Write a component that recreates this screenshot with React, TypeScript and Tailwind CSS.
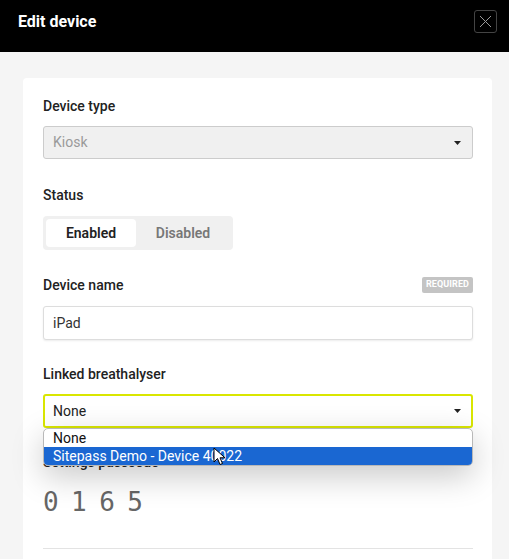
import React from "react";

function Caret() {
  return (
    <svg width="7" height="4" viewBox="0 0 7 4" className="shrink-0">
      <path d="M0 0 L7 0 L3.5 4 Z" fill="#222" />
    </svg>
  );
}

export default function App() {
  return (
    <div
      className="w-[509px] h-[559px] overflow-hidden bg-[#f5f5f5] flex flex-col"
      style={{ fontFamily: "Roboto, 'Noto Sans', sans-serif" }}
    >
      {/* Header */}
      <div className="h-[52px] shrink-0 bg-black px-[18px] pt-[10px] pr-[12px]">
        <div className="flex items-center justify-between h-[23px]">
          <div className="text-white text-[16px] font-bold leading-[23px]">Edit device</div>
          <div className="w-[23px] h-[23px] border border-[#444] rounded-[3px] flex items-center justify-center">
            <svg width="13" height="13" viewBox="0 0 13 13">
              <path d="M1 1 L12 12 M12 1 L1 12" stroke="#9a9a9a" strokeWidth="1" />
            </svg>
          </div>
        </div>
      </div>

      {/* Body */}
      <div className="flex-1 pl-[23px] pr-[17px] pt-[26px]">
        <div className="bg-white rounded-[4px] pl-5 pr-[19px] pt-[18px] pb-10">
          {/* Device type */}
          <div className="text-[14px] font-medium text-[#222] leading-5 mb-[10px]">Device type</div>
          <div className="h-[33px] bg-[#f0f0f0] border border-[#cccccc] rounded-[3px] flex items-center justify-between pl-[9px] pr-[11px]">
            <span className="text-[14px] text-[#9a9a9a]">Kiosk</span>
            <Caret />
          </div>

          {/* Status */}
          <div className="text-[14px] font-medium text-[#222] leading-5 mt-[26px] mb-[11px]">Status</div>
          <div className="w-[190px] h-[34px] bg-[#f0f0f0] rounded-[4px] p-[3px] flex">
            <div className="w-[90px] h-full bg-white rounded-[4px] flex items-center justify-center text-[14px] font-semibold text-[#222]">
              Enabled
            </div>
            <div className="flex-1 h-full flex items-center justify-center text-[14px] font-semibold text-[#777]">
              Disabled
            </div>
          </div>

          {/* Device name */}
          <div className="flex items-center justify-between mt-[25px] mb-[11px] h-5">
            <div className="text-[14px] font-medium text-[#222] leading-5">Device name</div>
            <div className="h-[16px] px-[4px] bg-[#c4c4c4] rounded-[2px] flex items-center text-[9px] font-bold text-white tracking-[0.1px]">
              REQUIRED
            </div>
          </div>
          <div className="h-[34px] bg-white border border-[#dddddd] rounded-[3px] shadow-[0_1px_2px_rgba(0,0,0,0.08)] flex items-center pl-[9px]">
            <span className="text-[14px] text-[#333]">iPad</span>
          </div>

          {/* Linked breathalyser */}
          <div className="text-[14px] font-medium text-[#222] leading-5 mt-[24px] mb-[10px]">Linked breathalyser</div>
          <div className="relative">
            <div className="h-[34px] bg-white border-2 border-[#d9e600] rounded-[3px] flex items-center justify-between pl-[8px] pr-[10px]">
              <span className="text-[14px] text-[#222]">None</span>
              <Caret />
            </div>
            <div className="absolute left-0 right-0 top-full z-10 bg-white border border-[#b8b8b8] rounded-[5px] overflow-hidden shadow-[0_10px_32px_rgba(0,0,0,0.22)]">
              <div className="h-[18px] flex items-center pl-[9px] text-[14px] text-[#111]">None</div>
              <div className="h-[18px] flex items-center pl-[9px] text-[14px] text-white bg-[#1a67d2]">
                Sitepass Demo - Device 40022
              </div>
            </div>
            <svg
              className="absolute z-20 left-[170px] top-[53px]"
              width="14"
              height="20"
              viewBox="0 0 14 20"
            >
              <path d="M1 1 L1 15 L4.5 11.5 L7 17.5 L9.5 16.5 L7 10.8 L12 10.8 Z" fill="#fff" stroke="#000" strokeWidth="1" strokeLinejoin="round" />
            </svg>
          </div>

          {/* Settings passcode */}
          <div className="text-[14px] font-medium text-[#222] leading-5 mt-[24px] mb-[14px]">Settings passcode</div>
          <div
            className="text-[26px] leading-[32px] text-[#666] tracking-[-1.6px]"
            style={{ fontFamily: "'DejaVu Sans Mono', monospace" }}
          >
            0 1 6 5
          </div>
          <div className="mt-[30px] h-px bg-[#e3e3e3]" />
        </div>
      </div>
    </div>
  );
}
